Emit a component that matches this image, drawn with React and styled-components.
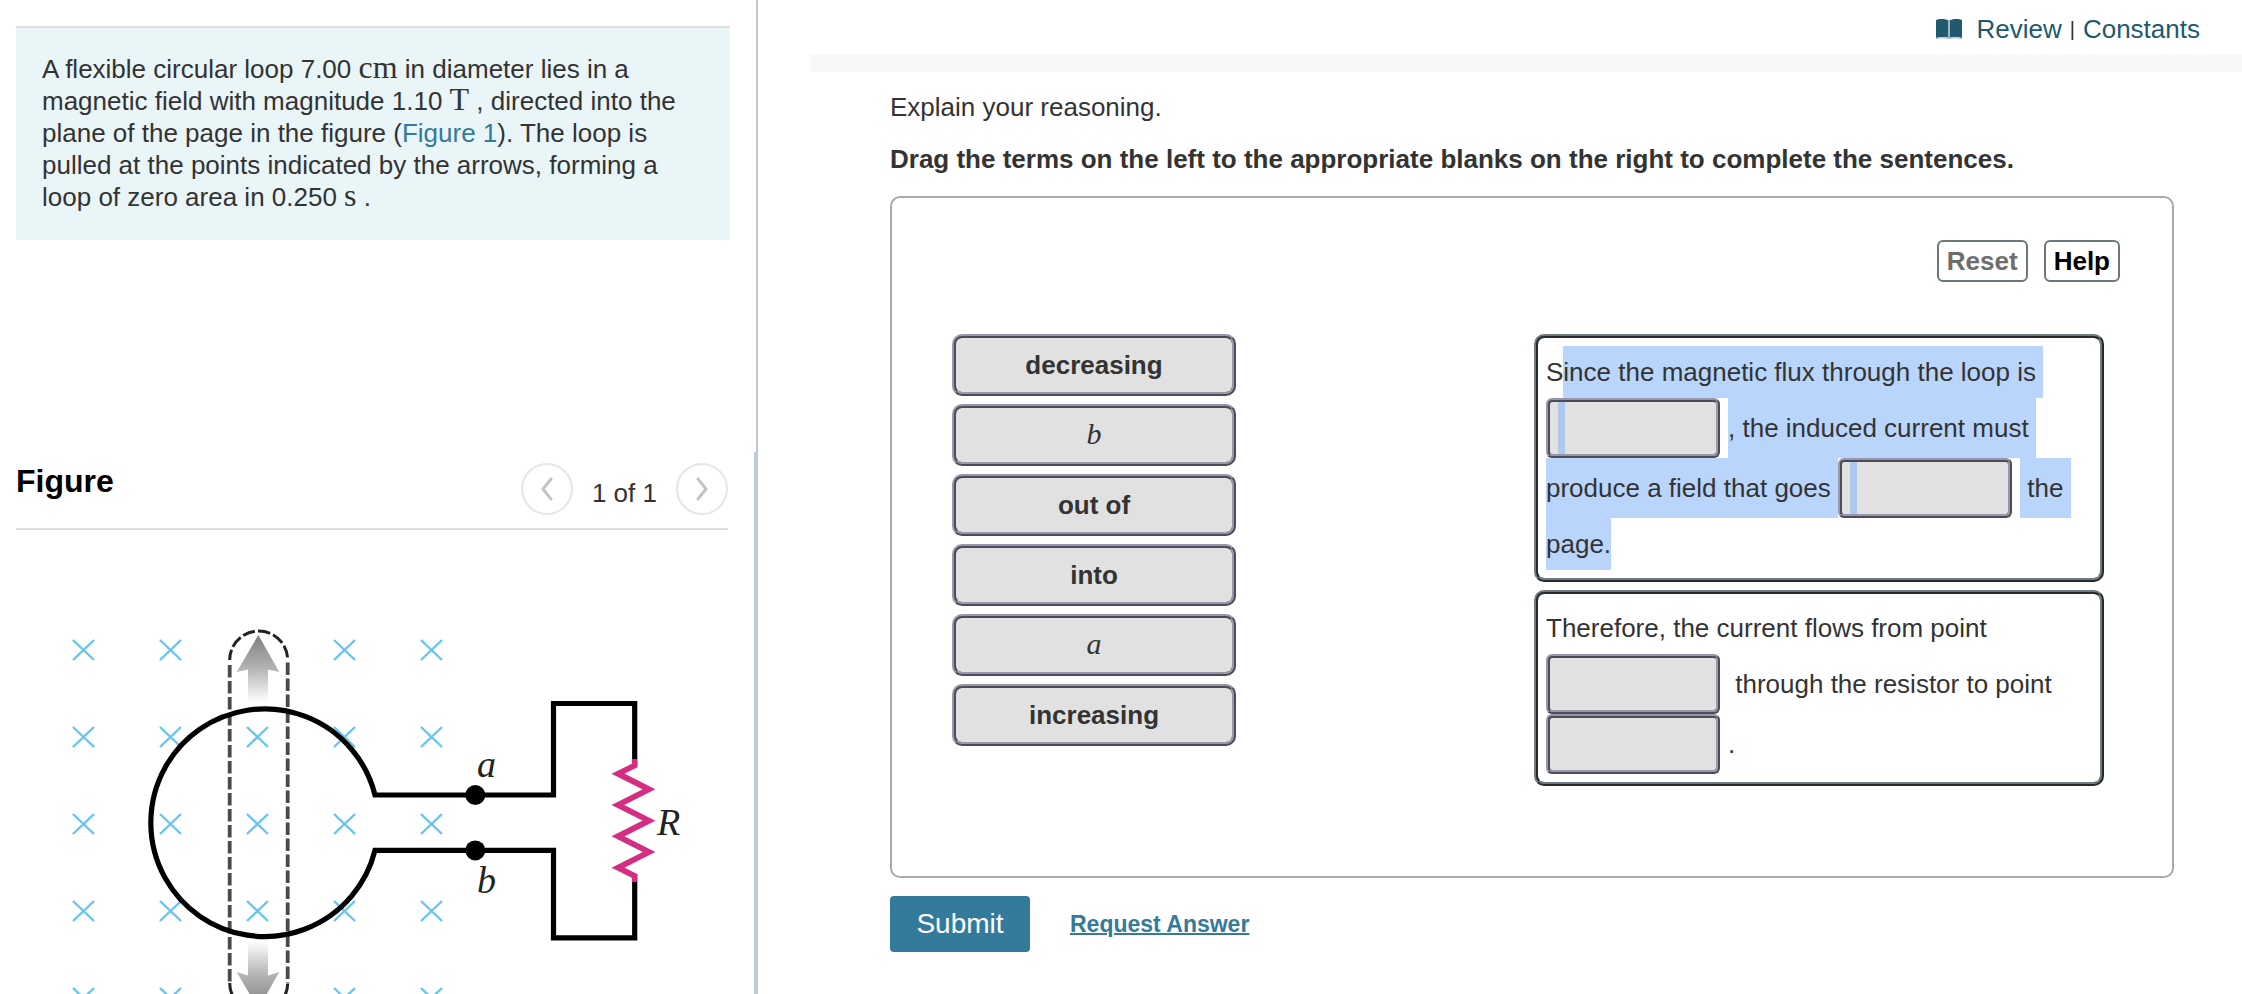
import React from 'react';
import styled, { createGlobalStyle, css } from 'styled-components';

const GlobalStyle = createGlobalStyle`
  * {
    box-sizing: border-box;
  }
  body {
    margin: 0;
    background: #fff;
    color: #333;
    font-family: "Liberation Sans", Arial, Helvetica, sans-serif;
    font-size: 26px;
    line-height: 32px;
  }
  button {
    font-family: inherit;
    color: inherit;
    cursor: pointer;
  }
`;

const Page = styled.div`
  display: grid;
  grid-template-columns: 758px minmax(0, 1fr);
  height: 100vh;
  overflow: hidden;
`;

const Side = styled.aside`
  display: grid;
  grid-template-rows: 452px minmax(0, 1fr);
  min-height: 0;
`;

const ProblemPane = styled.section`
  padding: 26px 26px 0 16px;
  border-right: 2px solid #bccadb;
`;

const Problem = styled.p`
  margin: 0;
  padding: 25px 26px 27px;
  border-top: 2px solid #dddfdf;
  background: #e9f5f7;
`;

const MathText = styled.span`
  font-family: "Liberation Serif", "Times New Roman", serif;
  font-size: ${props => (props.$variable ? '30px' : '32px')};
  font-weight: normal;
  font-style: ${props => (props.$variable ? 'italic' : 'normal')};
  line-height: 24px;
`;

const FigureLink = styled.a`
  color: #337a9b;
  text-decoration: none;
`;

const FigurePane = styled.section`
  padding: 0 26px 0 16px;
  border-right: 4px solid #bccadb;
  overflow: hidden;
`;

const FigureHeader = styled.header`
  display: flex;
  justify-content: space-between;
  align-items: flex-start;
  padding: 11px 0 13px;
  border-bottom: 2px solid #ddd;
`;

const FigureTitle = styled.h2`
  margin: 0;
  color: #000;
  font-size: 32px;
  line-height: 36px;
`;

const Pager = styled.nav`
  display: flex;
  align-items: center;
  gap: 19px;
`;

const PagerCount = styled.span`
  padding-top: 8px;
`;

const PagerButton = styled.button`
  display: flex;
  align-items: center;
  justify-content: center;
  width: 52px;
  height: 52px;
  padding: 0;
  border: 2px solid #e6e6e6;
  border-radius: 50%;
  background: #fff;
`;

const Drawing = styled.svg`
  display: block;
  width: 100%;
  height: auto;
`;

const Main = styled.main`
  min-width: 0;
`;

const TopBar = styled.header`
  display: flex;
  align-items: center;
  justify-content: flex-end;
  gap: 8px;
  height: 54px;
  padding: 4px 42px 0 0;

  svg {
    margin-right: 6px;
  }
`;

const TopLink = styled.a`
  color: #21596d;
  text-decoration: none;
`;

const TopDivider = styled.span`
  font-size: 20px;
`;

const Band = styled.div`
  height: 18px;
  margin-left: 52px;
  background: #f8f8f8;
`;

const Question = styled.section`
  padding: 19px 68px 0 132px;
`;

const Prompt = styled.p`
  margin: 0 0 20px;
`;

const Instructions = styled.h3`
  margin: 0 0 21px;
  font-size: 26px;
  line-height: 32px;
`;

const Workspace = styled.div`
  padding: 42px 52px 90px 60px;
  border: 2px solid #a9a9a9;
  border-radius: 10px;
`;

const Toolbar = styled.div`
  display: flex;
  justify-content: flex-end;
  gap: 16px;
  margin-bottom: 52px;
`;

const ToolButton = styled.button`
  height: 42px;
  padding: 0 8px;
  border: 2px solid #6c777c;
  border-radius: 6px;
  background: #fff;
  color: #000;
  font-size: 26px;
  font-weight: bold;

  &:disabled {
    color: #6e6e6e;
    cursor: default;
  }
`;

const Columns = styled.div`
  display: flex;
  justify-content: space-between;
  align-items: flex-start;
  padding-right: 16px;
`;

const Terms = styled.div`
  display: flex;
  flex-direction: column;
  gap: 8px;
`;

const ridge = css`
  border: 4px ridge #9896aa;
  background: #e1e1e1;
`;

const Term = styled.button`
  ${ridge}
  width: 284px;
  height: 62px;
  padding: 0;
  border-radius: 10px;
  font-size: 26px;
  font-weight: bold;
`;

const Sentences = styled.div`
  display: flex;
  flex-direction: column;
  gap: 8px;
  flex: 0 1 570px;
`;

const Sentence = styled.div`
  padding: 8px;
  border: 4px ridge #6f7b80;
  border-radius: 10px;
  line-height: 52px;
`;

const Blank = styled.button`
  ${ridge}
  width: 174px;
  margin: 0 8px 0 0;
  padding: 0 8px;
  border-radius: 6px;
  font-size: 26px;
  line-height: 52px;
  text-align: left;
  vertical-align: baseline;
`;

// $tall runs share their line with a blank, so they cover its borders too
const Selected = styled.span`
  display: inline-block;
  padding: ${props => (props.$tall ? '4px 0' : '0')};
  background: ${props => (props.$inBlank ? '#adc9ee' : '#b9d5fb')};
  white-space: pre;
`;

const Actions = styled.div`
  display: flex;
  align-items: center;
  gap: 40px;
  margin-top: 18px;
`;

const SubmitButton = styled.button`
  width: 140px;
  height: 56px;
  padding: 0;
  border: 0;
  border-radius: 4px;
  background: #337a9b;
  color: #fff;
  font-size: 28px;
`;

const RequestLink = styled.a`
  color: #337a9b;
  font-size: 23px;
  font-weight: bold;
  text-decoration: underline;
  text-decoration-thickness: 2px;
`;

const terms = [
  { label: 'decreasing' },
  { label: 'b', variable: true },
  { label: 'out of' },
  { label: 'into' },
  { label: 'a', variable: true },
  { label: 'increasing' },
];

const columns = [83, 170, 257, 344, 431];
const rows = [650, 737, 824, 911, 998];

const Chevron = ({ points }) => (
  <svg width='16' height='24' viewBox='0 0 16 24' aria-hidden='true'>
    <polyline points={points} fill='none' stroke='#c4c4c4' strokeWidth='3' strokeLinecap='round' />
  </svg>
);

const BookIcon = () => (
  <svg width='26' height='22' viewBox='0 0 26 22' aria-hidden='true'>
    <path d='M0 2C2 0.6 9 0.4 12 2.2V19.6C9 18.9 3 18.9 0 20Z' fill='#21596d' />
    <path d='M26 2C24 0.6 17 0.4 14 2.2V19.6C17 18.9 23 18.9 26 20Z' fill='#21596d' />
    <path d='M13 2V20' stroke='#9dbac4' strokeWidth='2' />
    <path d='M0 20.5C4 19.6 9 19.6 13 20.5C17 19.6 22 19.6 26 20.5' fill='none' stroke='#9dbac4' />
  </svg>
);

const LoopDrawing = () => (
  <Drawing viewBox='16 530 712 500' role='img' aria-label='Loop in a magnetic field connected to resistor R'>
    <defs>
      <linearGradient id='pullUp' x1='0' y1='0' x2='0' y2='1'>
        <stop offset='0' stopColor='#808080' />
        <stop offset='0.5' stopColor='#b4b4b4' />
        <stop offset='1' stopColor='#fff' />
      </linearGradient>
      <linearGradient id='pullDown' x1='0' y1='1' x2='0' y2='0'>
        <stop offset='0' stopColor='#808080' />
        <stop offset='0.5' stopColor='#b4b4b4' />
        <stop offset='1' stopColor='#fff' />
      </linearGradient>
    </defs>
    <g stroke='#66c5f0' strokeWidth='2.4'>
      {rows.map((y, i) => columns
        .filter((x, j) => !(j === 2 && (i === 0 || i === 4)))
        .map(x => (
          <path key={`${x}-${y}`} d={`M${x - 10} ${y - 10}l21 20M${x + 11} ${y - 10}l-21 20`} />
        )))}
    </g>
    <path d='M258.3 635L279.3 672L268 669.5V702H248V669.5L236.7 672Z' fill='url(#pullUp)' />
    <path d='M258.3 1009L279.3 972L268 975.5V941H248V975.5L236.7 972Z' fill='url(#pullDown)' />
    <g fill='none' stroke='#4a4a4a' strokeWidth='3.8'>
      <path d='M229.7 665V983' strokeDasharray='12.4 3.6' />
      <path d='M287.7 662.5V983' strokeDasharray='12.4 3.6' />
      <path
        d='M229.7 660A29 29 0 0 1 287.7 660'
        stroke='#222'
        strokeWidth='3'
        strokeDasharray='12.4 3.2'
        strokeDashoffset='2'
      />
      <path d='M229.7 983A29 29 0 0 0 287.7 983' stroke='#222' strokeWidth='3' strokeDasharray='12.4 3.2' />
    </g>
    <g fill='none' stroke='#000' strokeWidth='5.2'>
      <path d='M634.7 759V703.5H553.5V795H375A113.8 113.8 0 1 0 375 850.4H553.5V937.8H634.7V882' />
      <path
        d='M634.7 759V765.5L618 773.7L649 789.3L618 805L649 820.7L618 836.3L649 852L618 867.7L634.7 876V882'
        stroke='#d42e82'
        strokeWidth='5.8'
      />
    </g>
    <circle cx='475.3' cy='795' r='10' />
    <circle cx='475.3' cy='850.4' r='10' />
    <g fill='#222' fontFamily='"Liberation Serif", "Times New Roman", serif' fontStyle='italic' fontSize='38'>
      <text x='477' y='777'>a</text>
      <text x='477' y='893'>b</text>
      <text x='657' y='835'>R</text>
    </g>
  </Drawing>
);

const App = () => (
  <>
    <GlobalStyle />
    <Page>
      <Side>
        <ProblemPane>
          <Problem>
            A flexible circular loop 7.00 <MathText>cm</MathText> in diameter lies in a magnetic
            field with magnitude 1.10 <MathText>T</MathText> , directed into the plane of the page
            in the figure (<FigureLink href='#figure'>Figure 1</FigureLink>). The loop is pulled at
            the points indicated by the arrows, forming a loop of zero area in
            0.250 <MathText>s</MathText> .
          </Problem>
        </ProblemPane>
        <FigurePane id='figure'>
          <FigureHeader>
            <FigureTitle>Figure</FigureTitle>
            <Pager aria-label='Figures'>
              <PagerButton type='button' aria-label='Previous figure'>
                <Chevron points='12,2 4,12 12,22' />
              </PagerButton>
              <PagerCount>1 of 1</PagerCount>
              <PagerButton type='button' aria-label='Next figure'>
                <Chevron points='4,2 12,12 4,22' />
              </PagerButton>
            </Pager>
          </FigureHeader>
          <LoopDrawing />
        </FigurePane>
      </Side>
      <Main>
        <TopBar>
          <BookIcon />
          <TopLink href='#review'>Review</TopLink>
          <TopDivider>|</TopDivider>
          <TopLink href='#constants'>Constants</TopLink>
        </TopBar>
        <Band />
        <Question>
          <Prompt>Explain your reasoning.</Prompt>
          <Instructions>
            Drag the terms on the left to the appropriate blanks on the right to complete the
            sentences.
          </Instructions>
          <Workspace>
            <Toolbar>
              <ToolButton type='button' disabled>Reset</ToolButton>
              <ToolButton type='button'>Help</ToolButton>
            </Toolbar>
            <Columns>
              <Terms>
                {terms.map(term => (
                  <Term key={term.label} type='button' draggable>
                    {term.variable ? <MathText $variable>{term.label}</MathText> : term.label}
                  </Term>
                ))}
              </Terms>
              <Sentences>
                <Sentence>
                  S<Selected>{'ince the magnetic flux through the loop is '}</Selected>
                  <Blank type='button' aria-label='Blank 1'><Selected $inBlank>{' '}</Selected></Blank>
                  <Selected $tall>{', the induced current must '}</Selected>
                  <Selected $tall>{'produce a field that goes '}</Selected>
                  <Blank type='button' aria-label='Blank 2'><Selected $inBlank>{' '}</Selected></Blank>
                  <Selected $tall>{' the '}</Selected>
                  <Selected>page.</Selected>
                </Sentence>
                <Sentence>
                  Therefore, the current flows from point{' '}
                  <Blank type='button' aria-label='Blank 3'>&nbsp;</Blank>
                  {' through the resistor to point '}
                  <Blank type='button' aria-label='Blank 4'>&nbsp;</Blank>.
                </Sentence>
              </Sentences>
            </Columns>
          </Workspace>
          <Actions>
            <SubmitButton type='submit'>Submit</SubmitButton>
            <RequestLink href='#answer'>Request Answer</RequestLink>
          </Actions>
        </Question>
      </Main>
    </Page>
  </>
);

export default App;
